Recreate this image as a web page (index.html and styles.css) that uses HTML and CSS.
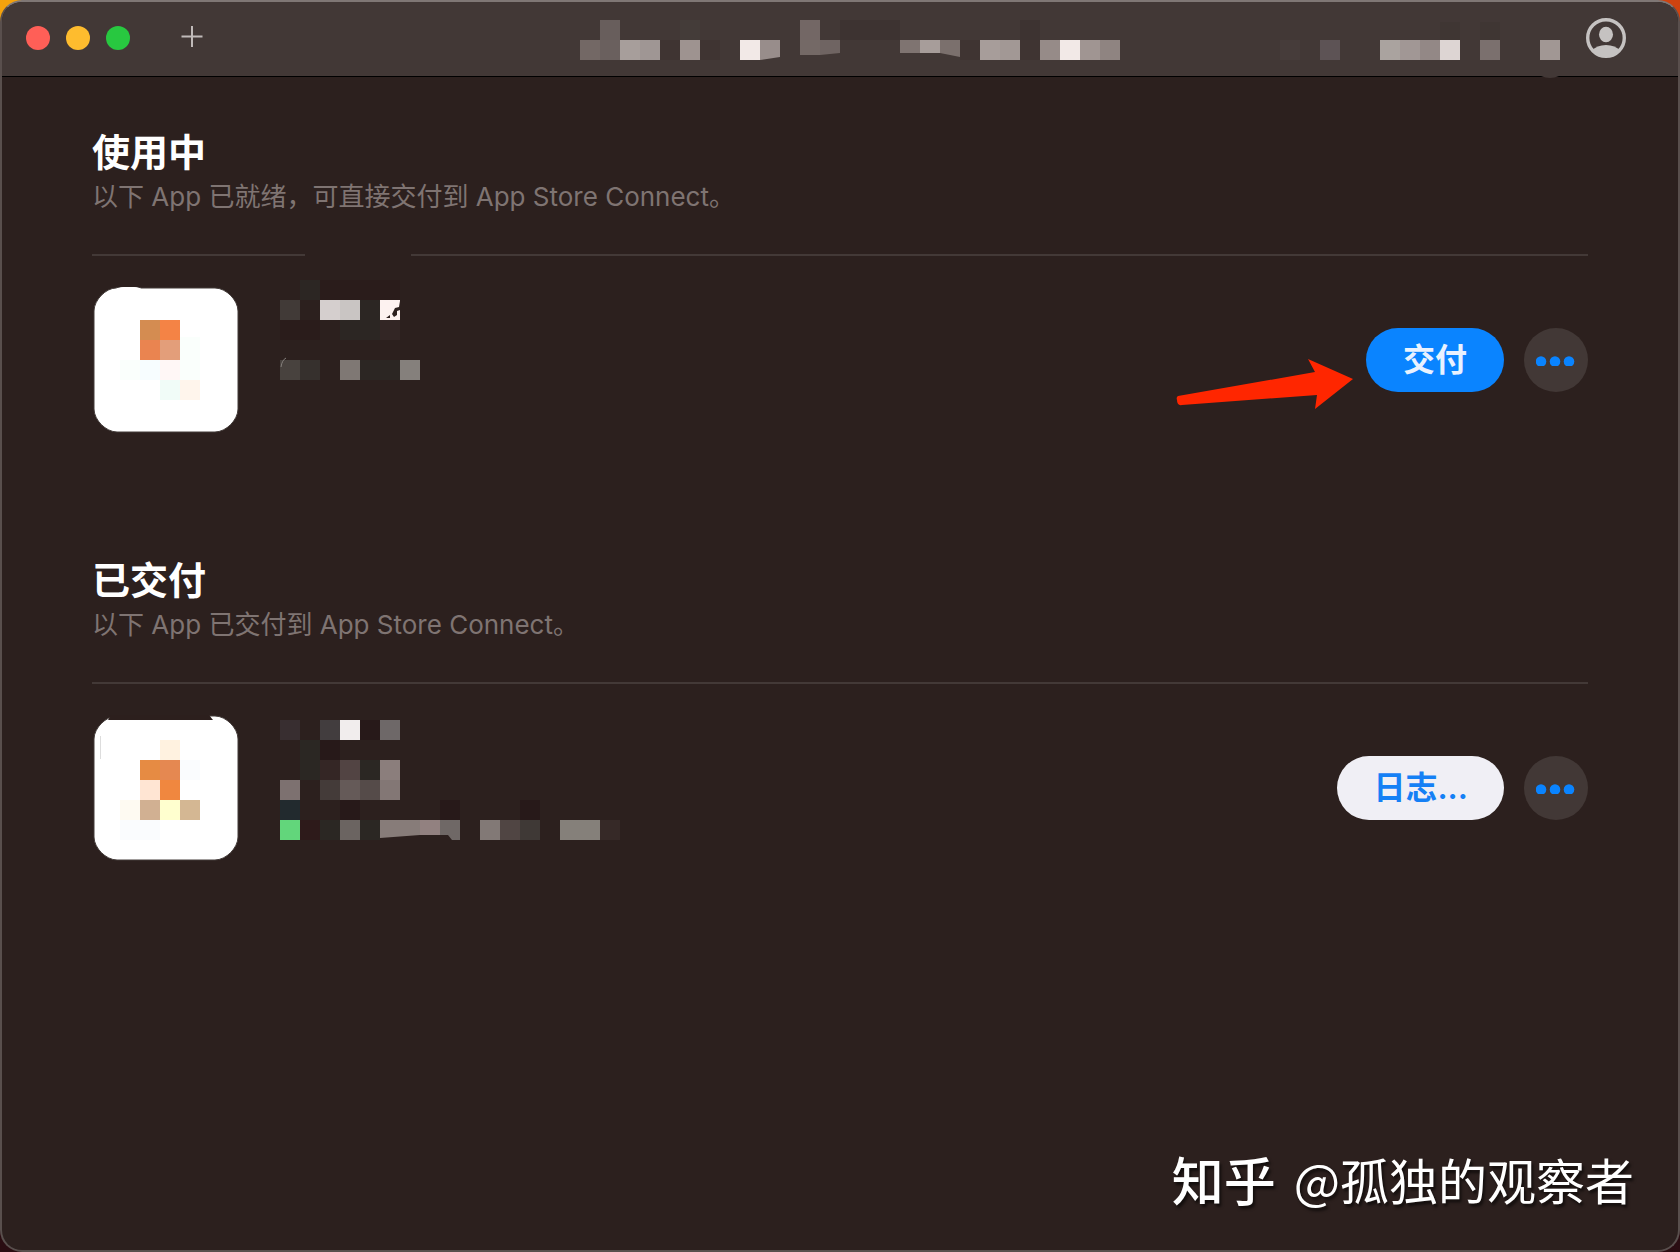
FILE: index.html
```html
<!DOCTYPE html>
<html lang="zh-CN">
<head>
<meta charset="utf-8">
<meta name="viewport" content="width=device-width, initial-scale=1">
<title>Transporter</title>
<link rel="stylesheet" href="styles.css">
</head>
<body>
<div class="window">
  <header class="titlebar">
    <div class="tools">
      <div class="lights">
        <button class="light close" aria-label="关闭"></button>
        <button class="light minimize" aria-label="最小化"></button>
        <button class="light zoom" aria-label="缩放"></button>
      </div>
      <button class="plain" aria-label="添加">
        <svg width="22" height="24" viewBox="0 0 22 24"><path d="M11 0V21M0.500 10.500H21.500" stroke="#c0bab9" stroke-width="2"/></svg>
      </button>
    </div>
    <svg class="mosaic" width="560" height="44" viewBox="560 16 560 44" aria-hidden="true">
      <path fill="#685e5c" d="M600 20h20v20h-20z"/>
      <path fill="#443c39" d="M680 20h20v20h-20z"/>
      <path fill="#736765" d="M800 20h20v20h-20z"/>
      <path fill="#3d3331" d="M840 20h60v20h-60zM1020 20h20v20h-20z"/>
      <path fill="#736865" d="M580 40h20v20h-20z"/>
      <path fill="#6a605e" d="M600 40h20v20h-20z"/>
      <path fill="#a79e9b" d="M620 40h20v20h-20z"/>
      <path fill="#9f9694" d="M640 40h20v20h-20z"/>
      <path fill="#3f3432" d="M660 40h20v20h-20zM700 40h20v20h-20zM960 40h20v20h-20zM1020 40h20v20h-20z"/>
      <path fill="#9e9390" d="M680 40h20v20h-20z"/>
      <path fill="#f2e9e7" d="M740 40h20v20h-20zM1060 40h20v20h-20z"/>
      <path fill="#988d8b" d="M760 40h20v17l-20 3z"/>
      <path fill="#746966" d="M800 40h20v15h-20z"/>
      <path fill="#6f6462" d="M820 40h20v13l-20 2z"/>
      <path fill="#7f7471" d="M900 40h20v13h-20z"/>
      <path fill="#a79d9a" d="M920 40h20v13h-20zM980 40h20v20h-20z"/>
      <path fill="#7b706d" d="M940 40h20v17l-20-4z"/>
      <path fill="#a29895" d="M1000 40h20v20h-20z"/>
      <path fill="#968b88" d="M1040 40h20v20h-20z"/>
      <path fill="#a09592" d="M1080 40h20v20h-20z"/>
      <path fill="#8f8481" d="M1100 40h20v20h-20z"/>
      <path fill="#423836" d="M779 0Q830-3 880-2.500T960 2z"/>
    </svg>
    <div class="account">
      <svg class="mosaic" width="280" height="44" viewBox="1280 16 280 44" aria-hidden="true">
        <path fill="#463c3a" d="M1280 40h20v20h-20z"/>
        <path fill="#5d5355" d="M1320 40h20v20h-20z"/>
        <path fill="#aaa39f" d="M1380 40h20v20h-20z"/>
        <path fill="#a19795" d="M1400 40h20v20h-20z"/>
        <path fill="#938886" d="M1420 40h20v20h-20z"/>
        <path fill="#ddd5d3" d="M1440 40h20v20h-20z"/>
        <path fill="#7b706e" d="M1480 40h20v20h-20z"/>
        <path fill="#a19794" d="M1540 40h20v20h-20z"/>
        <path fill="#3f3633" d="M1440 22h20v18h-20zM1480 22h20v18h-20z"/>
        <path fill="#423836" d="M1541 76q9 4 18 0z"/>
      </svg>
      <button class="plain" aria-label="账户">
        <svg width="40" height="40" viewBox="0 0 40 40">
          <clipPath id="face"><circle cx="20" cy="20" r="18.500"/></clipPath>
          <circle cx="20" cy="20" r="18.300" fill="none" stroke="#c5c2c1" stroke-width="3.400"/>
          <ellipse cx="20" cy="16.500" rx="7" ry="7.700" fill="#c5c2c1"/>
          <path clip-path="url(#face)" d="M5 33Q11 27 20 27T35 33V40H5z" fill="#c5c2c1"/>
        </svg>
      </button>
    </div>
  </header>

  <main class="content">
    <section class="group">
      <h2 class="heading">使用中</h2>
      <p class="note">以下 App 已就绪，可直接交付到 App Store Connect。</p>
      <div class="rule broken"></div>
      <div class="app">
        <svg class="tile" width="146" height="146" viewBox="93 287 146 146" aria-hidden="true">
          <path d="M116 288C120 286 137 286 141 288H215C226 288 238 300 238 311V409C238 420 226 432 215 432H117C106 432 94 420 94 409V311C94 300 106 288 116 288z" fill="#fff" stroke="#423a38"/>
          <path fill="#fff" d="M117 289C121 286 137 286 141 289z"/>
          <path fill="#d48c51" d="M140 320h20v20h-20z"/>
          <path fill="#f48345" d="M160 320h20v20h-20z"/>
          <path fill="#ea8450" d="M140 340h20v20h-20z"/>
          <path fill="#e39e7a" d="M160 340h20v20h-20z"/>
          <path fill="#fafffc" d="M180 337h20v43h-20zM120 360h20v20h-20z"/>
          <path fill="#f7fdff" d="M140 360h20v20h-20z"/>
          <path fill="#fff7f6" d="M160 360h20v20h-20z"/>
          <path fill="#f1fcf8" d="M160 380h20v20h-20z"/>
          <path fill="#fff5ec" d="M180 380h20v20h-20z"/>
        </svg>
        <svg class="details" width="440" height="144" viewBox="280 288 440 144" aria-hidden="true">
          <path fill="#2c2623" d="M300 280h20v20h-20zM360 300h20v20h-20zM340 320h40v20h-40z"/>
          <path fill="#2a1c1b" d="M320 280h80v20h-80zM280 320h40v20h-40z"/>
          <path fill="#332625" d="M380 320h20v20h-20z"/>
          <path fill="#413a37" d="M280 300h20v20h-20z"/>
          <path fill="#d5cfce" d="M320 300h20v20h-20z"/>
          <path fill="#c9c5c3" d="M340 300h20v20h-20z"/>
          <path fill="#fdf2f0" d="M380 300h20v20h-20z"/>
          <path fill="#2c201e" d="M400 301l-1 6-4 1-3 6 2 3 3-2 0-4 3-1zM386 318l4-3v3z"/>
          <path fill="#48423e" d="M280 360h20v20h-20z"/>
          <path fill="#36302d" d="M300 360h20v20h-20z"/>
          <path fill="#7f7874" d="M340 360h20v20h-20z"/>
          <path fill="#2c2623" d="M360 360h40v20h-40z"/>
          <path fill="#85807c" d="M400 360h20v20h-20z"/>
          <path fill="none" stroke="#85807c" d="M281 367q1-7 5-9"/>
        </svg>
        <div class="actions">
          <svg class="pointer" width="177" height="52" viewBox="1176 358 177 52" aria-hidden="true">
            <path fill="#ff2600" d="M1178 396L1315 372L1308 359L1353 379L1315 409L1317 395L1182 405Q1177 406 1177 400Q1176 397 1178 396z"/>
          </svg>
          <button class="pill primary">交付</button>
          <button class="more" aria-label="更多">
            <svg width="40" height="12" viewBox="0 0 40 12"><g fill="#0a84ff"><circle cx="5" cy="7.500" r="5.300"/><circle cx="19" cy="7.500" r="5.300"/><circle cx="33" cy="7.500" r="5.300"/></g></svg>
          </button>
        </div>
      </div>
    </section>

    <section class="group">
      <h2 class="heading">已交付</h2>
      <p class="note">以下 App 已交付到 App Store Connect。</p>
      <div class="rule"></div>
      <div class="app">
        <svg class="tile" width="146" height="146" viewBox="93 715 146 146" aria-hidden="true">
          <path d="M117 716H215C226 716 238 728 238 739V837C238 848 226 860 215 860H117C106 860 94 848 94 837V739C94 728 106 716 117 716z" fill="#fff" stroke="#423a38"/>
          <path fill="#2c1f1d" d="M108 720l3-5h98l4 5z"/>
          <path fill="#fff2e0" d="M160 740h20v20h-20z"/>
          <path fill="#e68b43" d="M140 760h20v20h-20z"/>
          <path fill="#e58851" d="M160 760h20v20h-20z"/>
          <path fill="#fafcfe" d="M180 760h20v20h-20zM120 820h40v20h-40z"/>
          <path fill="#ffe5d3" d="M140 780h20v20h-20z"/>
          <path fill="#f0873f" d="M160 780h20v20h-20z"/>
          <path fill="#fefaf2" d="M120 800h20v20h-20z"/>
          <path fill="#d1b092" d="M140 800h20v20h-20z"/>
          <path fill="#ffffcf" d="M160 800h20v20h-20z"/>
          <path fill="#d4b793" d="M180 800h20v20h-20z"/>
          <path stroke="#ddd" d="M100.500 736v23"/>
        </svg>
        <svg class="details" width="440" height="144" viewBox="280 716 440 144" aria-hidden="true">
          <path fill="#382e30" d="M280 720h20v20h-20z"/>
          <path fill="#423d3e" d="M320 720h20v20h-20z"/>
          <path fill="#f1eded" d="M340 720h20v20h-20z"/>
          <path fill="#271919" d="M360 720h20v20h-20zM320 740h20v20h-20zM340 800h20v20h-20zM440 800h20v20h-20zM520 800h20v20h-20z"/>
          <path fill="#6e6868" d="M380 720h20v20h-20z"/>
          <path fill="#2b2723" d="M300 740h20v40h-20zM360 760h20v20h-20zM320 820h20v20h-20zM360 820h20v20h-20z"/>
          <path fill="#342625" d="M320 760h20v20h-20z"/>
          <path fill="#524443" d="M340 760h20v20h-20z"/>
          <path fill="#8b7e7c" d="M380 760h20v20h-20z"/>
          <path fill="#7d7170" d="M280 780h20v20h-20z"/>
          <path fill="#443b39" d="M320 780h20v20h-20z"/>
          <path fill="#655a58" d="M340 780h20v20h-20z"/>
          <path fill="#554b49" d="M360 780h20v20h-20z"/>
          <path fill="#837775" d="M380 780h20v20h-20z"/>
          <path fill="#222a2e" d="M280 800h20v20h-20z"/>
          <path fill="#62d67b" d="M280 820h20v20h-20z"/>
          <path fill="#2d1a1a" d="M300 820h20v20h-20z"/>
          <path fill="#6b6461" d="M340 820h20v20h-20z"/>
          <path fill="#877c79" d="M380 820h40v15l-40 3z"/>
          <path fill="#928180" d="M420 820h20v15h-20z"/>
          <path fill="#6f6866" d="M440 820h20v20h-8l-4-5h-8z"/>
          <path fill="#827976" d="M480 820h20v20h-20z"/>
          <path fill="#504543" d="M500 820h20v20h-20z"/>
          <path fill="#3f3936" d="M520 820h20v20h-20z"/>
          <path fill="#85807a" d="M560 820h40v20h-40z"/>
          <path fill="#362927" d="M600 820h20v20h-20z"/>
        </svg>
        <div class="actions">
          <button class="pill secondary">日志...</button>
          <button class="more" aria-label="更多">
            <svg width="40" height="12" viewBox="0 0 40 12"><g fill="#0a84ff"><circle cx="5" cy="7.500" r="5.300"/><circle cx="19" cy="7.500" r="5.300"/><circle cx="33" cy="7.500" r="5.300"/></g></svg>
          </button>
        </div>
      </div>
    </section>
  </main>

  <footer class="credit"><span class="brand">知乎</span><span>@孤独的观察者</span></footer>
</div>
</body>
</html>
```
FILE: styles.css
```css
* { box-sizing: border-box; }

body {
  margin: 0;
  min-height: 100vh;
  display: flex;
  background:
    linear-gradient(#f5a20c, #f5a20c) 0 0 / 50% 50% no-repeat,
    linear-gradient(#cf4310, #cf4310) 100% 0 / 50% 50% no-repeat,
    #2a0d12;
  color: #fff;
  font-family: Inter, "Noto Sans CJK SC", sans-serif;
}

button {
  border: 0;
  padding: 0;
  font: inherit;
  cursor: pointer;
}

svg { display: block; flex: none; }

.window {
  flex: 1;
  display: flex;
  flex-direction: column;
  border: 2px solid #594f4d;
  border-top-color: #7f7775;
  border-radius: 22px;
  background: #2c201e;
  overflow: hidden;
}

.titlebar {
  display: grid;
  grid-template-columns: 1fr auto 1fr;
  align-items: center;
  height: 75px;
  padding: 0 24px 2px;
  background: #423836;
  border-bottom: 1px solid #000;
}

.tools, .lights, .account { display: flex; align-items: center; }
.tools { gap: 51px; }
.lights { gap: 16px; }
.account { justify-content: flex-end; gap: 26px; padding-right: 28px; }

.light { width: 24px; height: 24px; border-radius: 50%; }
.close { background: #ff5f57; }
.minimize { background: #febc2e; }
.zoom { background: #28c840; }

.plain { background: none; }
.mosaic, .details { overflow: visible; }

.content { flex: 1; padding: 53px 90px 0; }
.group { margin-bottom: 125px; }

.heading {
  margin: 0 0 6px;
  font-size: 38px;
  line-height: 44px;
  font-weight: 700;
}

.note {
  margin: 0 0 40px;
  font-size: 26px;
  line-height: 34px;
  font-weight: 400;
  color: #7f7472;
}

.rule { height: 2px; background: #433937; }
.broken {
  background: linear-gradient(to right, #433937 213px, transparent 213px 319px, #433937 319px);
}

.app {
  display: flex;
  align-items: center;
  padding: 31px 0 0 1px;
}
.details { margin-left: 41px; }

.actions {
  position: relative;
  display: flex;
  gap: 20px;
  margin-left: auto;
}
.pointer { position: absolute; top: 30px; right: calc(100% + 13px); }

.pill {
  min-width: 138px;
  height: 64px;
  padding: 0 36px;
  border-radius: 32px;
  font-size: 32px;
  line-height: 64px;
  font-weight: 600;
}
.primary { background: #0a84ff; color: #e9f2ff; }
.secondary { background: #f0eff5; color: #1580f5; }

.more {
  display: grid;
  place-items: center;
  width: 64px;
  height: 64px;
  border-radius: 50%;
  background: #423836;
}

.credit {
  display: flex;
  justify-content: flex-end;
  align-items: center;
  gap: 18px;
  padding: 0 44px 35px;
  font-family: "Noto Sans CJK SC", sans-serif;
  font-size: 49px;
  line-height: 72px;
  text-shadow: 2px 3px 3px #0009;
}
.brand { font-size: 52px; font-weight: 500; }
```
